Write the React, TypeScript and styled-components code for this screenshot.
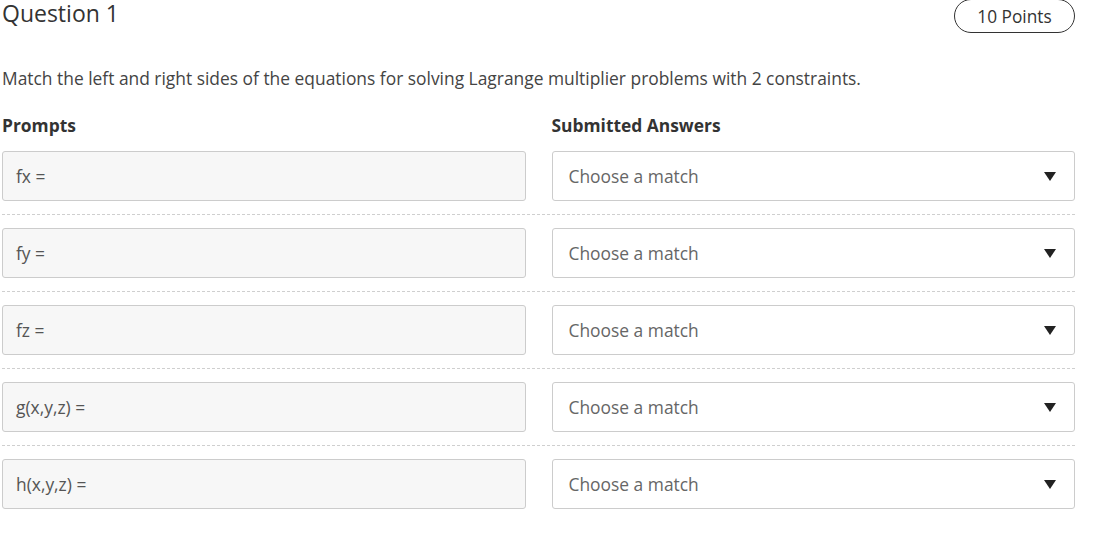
import React from 'react';
import styled, { createGlobalStyle } from 'styled-components';

const GlobalStyle = createGlobalStyle`
  html, body {
    margin: 0;
    padding: 0;
    background: #fff;
    font-family: 'Open Sans', 'Noto Sans', sans-serif;
    color: #333;
  }
`;

const Page = styled.div`
  padding: 0 23px 0 2px;
`;

const Header = styled.div`
  display: flex;
  justify-content: space-between;
  align-items: flex-start;
  height: 33px;
`;

const Title = styled.h1`
  margin: 0;
  font-size: 23px;
  font-weight: 400;
  color: #333;
  line-height: 26px;
`;

const PointsPill = styled.div`
  box-sizing: border-box;
  height: 34px;
  margin-top: -1px;
  width: 121px;
  border: 1px solid #333;
  border-radius: 17px;
  display: flex;
  align-items: center;
  justify-content: center;
  font-size: 17.3px;
  color: #333;
`;

const Instructions = styled.p`
  margin: 32px 0 0;
  font-size: 17.4px;
  line-height: 26px;
  color: #444;
`;

const Columns = styled.div`
  display: grid;
  grid-template-columns: 1fr 1fr;
  column-gap: 26px;
`;

const ColumnHead = styled.div`
  font-size: 17.4px;
  font-weight: 700;
  color: #333;
  line-height: 24px;
  margin-top: 22px;
  margin-bottom: 14px;
`;

const Row = styled(Columns)<{ $last?: boolean }>`
  padding-bottom: 13px;
  margin-bottom: 13px;
  border-bottom: ${(p) => (p.$last ? 'none' : '1px dashed #cfcfcf')};
`;

const Field = styled.div`
  box-sizing: border-box;
  height: 50px;
  border: 1px solid #ccc;
  border-radius: 3px;
  display: flex;
  align-items: center;
`;

const Prompt = styled(Field)`
  background: #f7f7f7;
  padding-left: 13px;
  font-size: 17.4px;
  color: #555;
`;

const Select = styled(Field)`
  background: #fff;
  padding: 0 18px 0 16px;
  justify-content: space-between;
  font-size: 17.4px;
  color: #666;
  cursor: pointer;
`;

const Caret = () => (
  <svg width="12" height="9" viewBox="0 0 12 9">
    <polygon points="0,0 12,0 6,9" fill="#222" />
  </svg>
);

const prompts = ['fx =', 'fy =', 'fz =', 'g(x,y,z) =', 'h(x,y,z) ='];

export default function App() {
  return (
    <Page>
      <GlobalStyle />
      <Header>
        <Title>Question 1</Title>
        <PointsPill>10 Points</PointsPill>
      </Header>
      <Instructions>
        Match the left and right sides of the equations for solving Lagrange multiplier problems with 2 constraints.
      </Instructions>
      <Columns>
        <ColumnHead>Prompts</ColumnHead>
        <ColumnHead>Submitted Answers</ColumnHead>
      </Columns>
      {prompts.map((p, i) => (
        <Row key={p} $last={i === prompts.length - 1}>
          <Prompt>{p}</Prompt>
          <Select>
            <span>Choose a match</span>
            <Caret />
          </Select>
        </Row>
      ))}
    </Page>
  );
}
